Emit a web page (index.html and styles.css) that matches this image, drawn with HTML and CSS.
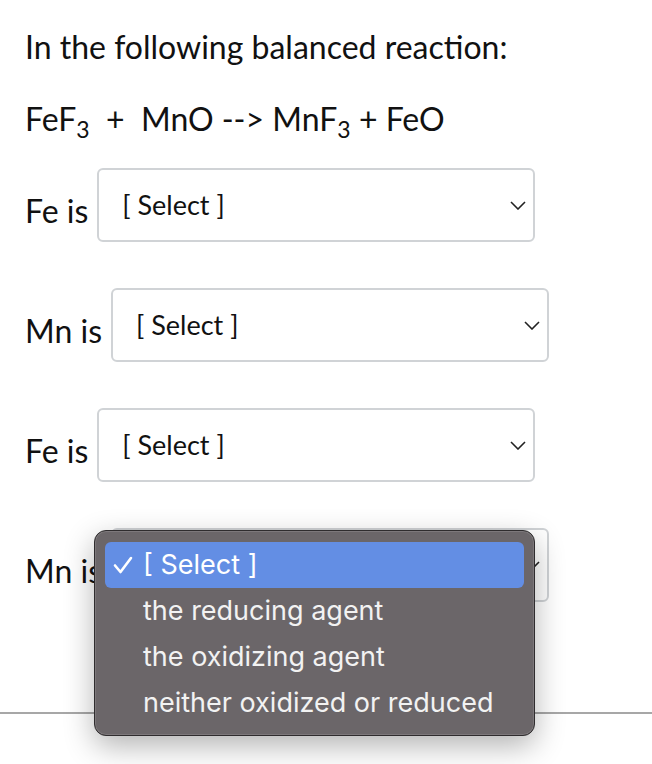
FILE: index.html
```html
<!DOCTYPE html>
<html lang="en">
<head>
    <meta charset="UTF-8">
    <meta name="viewport" content="width=device-width, initial-scale=1.0">
    <title>Quiz Question</title>
    <link rel="stylesheet" href="styles.css">
</head>
<body>
    <main class="question">
        <p class="question-text">In the following balanced reaction:</p>
        <p class="reaction">FeF<sub>3</sub>&nbsp; + &nbsp;MnO --&gt; MnF<sub>3</sub> + FeO</p>

        <div class="answer-row">
            <span class="answer-label">Fe is</span>
            <div class="select-box">
                <span class="select-value">[ Select ]</span>
                <svg class="chevron" width="16" height="9" viewBox="0 0 16 9"><path d="M1 1 L8 8 L15 1" fill="none" stroke="#222" stroke-width="1.6"/></svg>
            </div>
        </div>

        <div class="answer-row">
            <span class="answer-label">Mn is</span>
            <div class="select-box">
                <span class="select-value">[ Select ]</span>
                <svg class="chevron" width="16" height="9" viewBox="0 0 16 9"><path d="M1 1 L8 8 L15 1" fill="none" stroke="#222" stroke-width="1.6"/></svg>
            </div>
        </div>

        <div class="answer-row">
            <span class="answer-label">Fe is</span>
            <div class="select-box">
                <span class="select-value">[ Select ]</span>
                <svg class="chevron" width="16" height="9" viewBox="0 0 16 9"><path d="M1 1 L8 8 L15 1" fill="none" stroke="#222" stroke-width="1.6"/></svg>
            </div>
        </div>

        <div class="answer-row open">
            <span class="answer-label">Mn is</span>
            <div class="select-box">
                <span class="select-value">[ Select ]</span>
                <svg class="chevron" width="16" height="9" viewBox="0 0 16 9"><path d="M1 1 L8 8 L15 1" fill="none" stroke="#222" stroke-width="1.6"/></svg>
            </div>
            <ul class="dropdown-menu">
                <li class="dropdown-item selected">
                    <svg class="check" width="20" height="18" viewBox="0 0 20 18"><path d="M2 9.5 L7.5 16 L18 2" fill="none" stroke="#fff" stroke-width="2.6" stroke-linecap="round" stroke-linejoin="round"/></svg>[ Select ]
                </li>
                <li class="dropdown-item">the reducing agent</li>
                <li class="dropdown-item">the oxidizing agent</li>
                <li class="dropdown-item">neither oxidized or reduced</li>
            </ul>
        </div>
    </main>
    <hr class="divider">
</body>
</html>
```

FILE: styles.css
```css
body { margin: 0; background-color: #fff; color: #111; font-family: Lato, "Open Sans", sans-serif; }
.question { padding: 28px 25px 0 25px; }
.question-text { font-size: 32px; line-height: 38px; margin: 0 0 34px 0; }
.reaction { font-size: 32px; line-height: 38px; margin: 0 0 30px 0; }
.reaction sub { font-size: 23px; line-height: 0; vertical-align: -7px; }
.answer-row { position: relative; display: flex; align-items: flex-start; margin-bottom: 46px; }
.answer-label { font-size: 32px; line-height: 36px; margin-top: 25px; margin-right: 9px; white-space: nowrap; }
.select-box { box-sizing: border-box; width: 438px; height: 74px; border: 2px solid #d0d3d6; border-radius: 6px; display: flex; align-items: center; justify-content: space-between; padding: 0 7px 0 23px; }
.select-value { font-size: 27px; line-height: 36px; margin-top: 0; }
.chevron { display: block; }
.dropdown-menu { position: absolute; top: 2px; left: 69px; box-sizing: border-box; width: 441px; height: 206px; margin: 0; padding: 11px 10px 10px 10px; list-style: none; background-color: #6b6669; border: 1px solid #2f2c2e; border-radius: 12px; box-shadow: 0 10px 30px rgba(0,0,0,0.3), inset 0 0 0 1px rgba(255,255,255,0.12); font-family: Inter, "Noto Sans", sans-serif; font-size: 27px; color: #f2f2f2; z-index: 10; }
.dropdown-item { height: 46px; line-height: 46px; padding-left: 38px; position: relative; border-radius: 6px; white-space: nowrap; }
.dropdown-item.selected { background-color: #638ee4; color: #fff; }
.check { position: absolute; left: 8px; top: 14px; }
.divider { margin: 110px 0 52px 0; border: none; border-top: 2px solid #a7a7a7; }
```
